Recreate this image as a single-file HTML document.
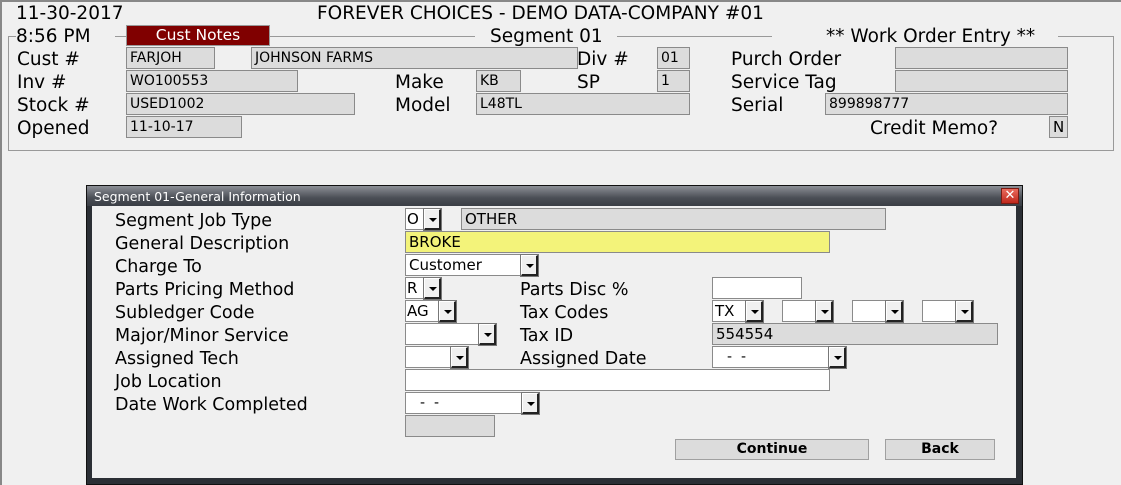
<!DOCTYPE html>
<html><head><meta charset="utf-8"><style>
*{margin:0;padding:0;box-sizing:border-box}
body{width:1121px;height:485px;background:#f0f0f0;position:relative;overflow:hidden;font-family:"DejaVu Sans","Liberation Sans",sans-serif;color:#000}
.a{position:absolute;white-space:nowrap}
.L{position:absolute;font-size:17.5px;line-height:22px;white-space:nowrap;margin-top:1px}
.f{position:absolute;background:#dcdcdc;border:1px solid #8a8a8a;height:22px;font-size:14px;line-height:21px;padding-left:3px;white-space:nowrap;overflow:hidden}
.w{background:#fff}
.y{background:#f3f37a}
.btn{position:absolute;width:17px;height:21px;background:#f0f0f0;border:1px solid #fff;border-right:2px solid #222;border-bottom:2px solid #222;outline:1px solid #777}
.btn:after{content:"";position:absolute;left:4px;top:8px;border-left:4px solid transparent;border-right:4px solid transparent;border-top:4px solid #000}
.pb{position:absolute;background:#dcdcdc;border:1px solid #a0a0a0;font-size:14px;font-weight:bold;text-align:center;line-height:19px;height:21px}
</style></head><body>
<div class="a" style="left:0;top:0;width:1121px;height:2px;background:#888"></div>
<div class="a" style="left:0;top:0;width:2px;height:485px;background:#888"></div>
<div class="a" style="left:16px;top:3px;font-size:18.5px">11-30-2017</div>
<div class="a" style="left:317px;top:3px;font-size:18.5px">FOREVER CHOICES - DEMO DATA-COMPANY #01</div>
<div class="a" style="left:8px;top:36px;width:1106px;height:115px;border:1px solid #999;border-top:none"></div>
<div class="a" style="left:8px;top:36px;width:8px;height:1px;background:#999"></div>
<div class="a" style="left:115px;top:36px;width:360px;height:1px;background:#999"></div>
<div class="a" style="left:617px;top:36px;width:155px;height:1px;background:#999"></div>
<div class="a" style="left:1058px;top:36px;width:56px;height:1px;background:#999"></div>
<div class="a" style="left:16px;top:26px;font-size:18.5px">8:56 PM</div>
<div class="a" style="left:126px;top:25px;width:144px;height:21px;background:#800000;border:1px solid #999;color:#fff;font-size:15.5px;text-align:center;line-height:19px">Cust Notes</div>
<div class="a" style="left:490px;top:26px;font-size:18.5px">Segment 01</div>
<div class="a" style="left:826px;top:26px;font-size:18.5px">** Work Order Entry **</div>

<div class="L" style="left:17px;top:48px;font-size:18.5px">Cust #</div>
<div class="L" style="left:17px;top:71px;font-size:18.5px">Inv #</div>
<div class="L" style="left:17px;top:94px;font-size:18.5px">Stock #</div>
<div class="L" style="left:17px;top:117px;font-size:18.5px">Opened</div>
<div class="f" style="left:126px;top:47px;width:89px">FARJOH</div>
<div class="f" style="left:251px;top:47px;width:327px">JOHNSON FARMS</div>
<div class="f" style="left:126px;top:70px;width:172px">WO100553</div>
<div class="f" style="left:126px;top:93px;width:229px">USED1002</div>
<div class="f" style="left:126px;top:116px;width:116px">11-10-17</div>
<div class="L" style="left:395px;top:71px;font-size:18.5px">Make</div>
<div class="L" style="left:395px;top:94px;font-size:18.5px">Model</div>
<div class="f" style="left:476px;top:70px;width:45px">KB</div>
<div class="f" style="left:476px;top:93px;width:214px">L48TL</div>
<div class="L" style="left:577px;top:48px;font-size:18.5px">Div #</div>
<div class="L" style="left:577px;top:71px;font-size:18.5px">SP</div>
<div class="f" style="left:657px;top:47px;width:33px">01</div>
<div class="f" style="left:657px;top:70px;width:33px">1</div>
<div class="L" style="left:731px;top:48px;font-size:18.5px">Purch Order</div>
<div class="L" style="left:731px;top:71px;font-size:18.5px">Service Tag</div>
<div class="L" style="left:731px;top:94px;font-size:18.5px">Serial</div>
<div class="L" style="left:870px;top:117px;font-size:18.5px">Credit Memo?</div>
<div class="f" style="left:895px;top:47px;width:173px"></div>
<div class="f" style="left:895px;top:70px;width:173px"></div>
<div class="f" style="left:825px;top:93px;width:243px">899898777</div>
<div class="f" style="left:1049px;top:116px;width:19px;font-size:15px">N</div>

<div class="a" style="left:86px;top:185px;width:937px;height:300px;background:#2b2f35;border:1px solid #111"></div>
<div class="a" style="left:87px;top:186px;width:935px;height:20px;background:linear-gradient(#8d9097,#4a4e55 60%,#3a3e45)"></div>
<div class="a" style="left:94px;top:189px;font-size:12.5px;color:#fff;line-height:16px">Segment 01-General Information</div>
<div class="a" style="left:1001px;top:188px;width:18px;height:16px;background:linear-gradient(#e96a5d,#c0281c);border:1px solid #7a1a12;color:#fff;font-size:13px;font-weight:bold;text-align:center;line-height:14px">✕</div>
<div class="a" style="left:92px;top:206px;width:924px;height:272px;background:#f0f0f0"></div>

<div class="L" style="left:115px;top:209px">Segment Job Type</div>
<div class="L" style="left:115px;top:232px">General Description</div>
<div class="L" style="left:115px;top:255px">Charge To</div>
<div class="L" style="left:115px;top:278px">Parts Pricing Method</div>
<div class="L" style="left:115px;top:301px">Subledger Code</div>
<div class="L" style="left:115px;top:324px">Major/Minor Service</div>
<div class="L" style="left:115px;top:347px">Assigned Tech</div>
<div class="L" style="left:115px;top:370px">Job Location</div>
<div class="L" style="left:115px;top:393px">Date Work Completed</div>
<div class="L" style="left:520px;top:278px">Parts Disc %</div>
<div class="L" style="left:520px;top:301px">Tax Codes</div>
<div class="L" style="left:520px;top:324px">Tax ID</div>
<div class="L" style="left:520px;top:347px">Assigned Date</div>

<div class="f w" style="left:405px;top:208px;width:20px;font-size:15px;padding-left:1px">O</div><div class="btn" style="left:424px;top:209px"></div>
<div class="f" style="left:461px;top:208px;width:425px;font-size:15px">OTHER</div>
<div class="f y" style="left:405px;top:231px;width:425px;font-size:15px">BROKE</div>
<div class="f w" style="left:405px;top:254px;width:117px;font-size:15px">Customer</div><div class="btn" style="left:521px;top:255px"></div>
<div class="f w" style="left:405px;top:277px;width:20px;font-size:15px;padding-left:1px">R</div><div class="btn" style="left:424px;top:278px"></div>
<div class="f w" style="left:712px;top:277px;width:90px"></div>
<div class="f w" style="left:405px;top:300px;width:35px;font-size:15px;padding-left:1px">AG</div><div class="btn" style="left:439px;top:301px"></div>
<div class="f w" style="left:712px;top:300px;width:34px;font-size:15px;padding-left:2px">TX</div><div class="btn" style="left:746px;top:301px"></div>
<div class="f w" style="left:782px;top:300px;width:34px"></div><div class="btn" style="left:816px;top:301px"></div>
<div class="f w" style="left:852px;top:300px;width:34px"></div><div class="btn" style="left:886px;top:301px"></div>
<div class="f w" style="left:922px;top:300px;width:34px"></div><div class="btn" style="left:956px;top:301px"></div>
<div class="f w" style="left:405px;top:323px;width:75px"></div><div class="btn" style="left:479px;top:324px"></div>
<div class="f" style="left:712px;top:323px;width:286px;font-size:15px">554554</div>
<div class="f w" style="left:405px;top:346px;width:47px"></div><div class="btn" style="left:451px;top:347px"></div>
<div class="f w" style="left:712px;top:346px;width:118px;padding-left:14px">-&nbsp;&nbsp;-</div><div class="btn" style="left:829px;top:347px"></div>
<div class="f w" style="left:405px;top:369px;width:425px"></div>
<div class="f w" style="left:405px;top:392px;width:118px;padding-left:14px">-&nbsp;&nbsp;-</div><div class="btn" style="left:522px;top:393px"></div>
<div class="f" style="left:405px;top:415px;width:90px"></div>
<div class="pb" style="left:675px;top:439px;width:194px">Continue</div>
<div class="pb" style="left:885px;top:439px;width:110px">Back</div>
</body></html>
